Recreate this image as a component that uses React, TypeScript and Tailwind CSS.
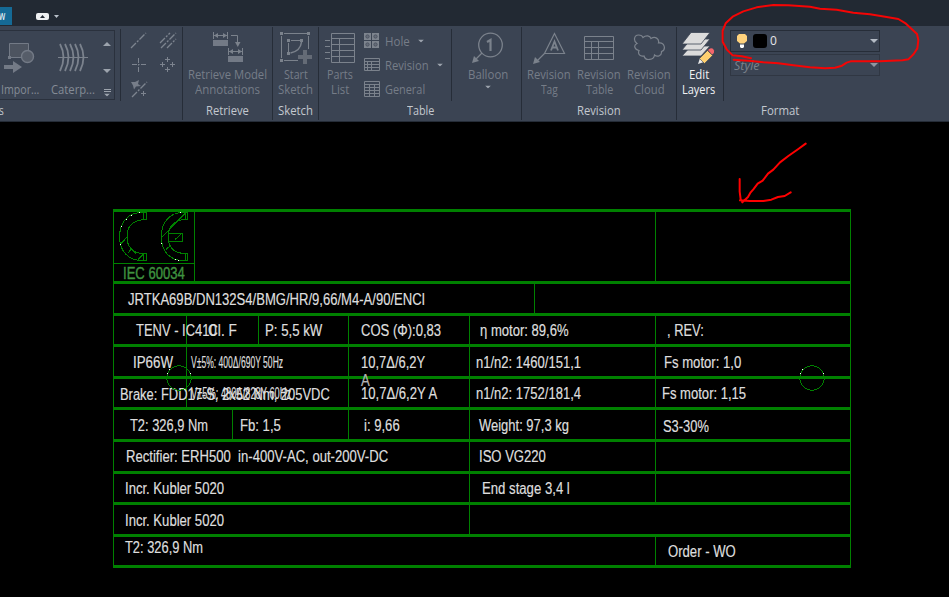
// src/App.tsx
import { useLayoutEffect, useRef, useState } from "react";
import type { ReactNode } from "react";

interface FitProps {
  w: number;
  className?: string;
  children: ReactNode;
}

// Condenses a single line of text to the given width
function Fit({ w, className = "", children }: FitProps) {
  const ref = useRef<HTMLSpanElement>(null);
  const [scale, setScale] = useState(1);

  useLayoutEffect(() => {
    if (ref.current) setScale(w / ref.current.offsetWidth);
  }, [w]);

  return (
    <span className={`block shrink-0 ${className}`} style={{ width: w }}>
      <span ref={ref} className="inline-block origin-left whitespace-pre align-top" style={{ transform: `scaleX(${scale})` }}>
        {children}
      </span>
    </span>
  );
}

function Caret({ className = "" }: { className?: string }) {
  return (
    <svg className={`shrink-0 ${className}`} width="8" height="4" viewBox="0 0 8 4">
      <path d="M0 0h8L4 4z" fill="currentColor" />
    </svg>
  );
}

const title = "mt-auto mb-[2px] flex h-[15px] justify-center text-[#c3c8cf]";
const bigButton = "flex flex-col items-center text-[#767d88]";

/* ---------- icons ---------- */

function ImportIcon() {
  return (
    <svg width="32" height="32" viewBox="0 0 32 32" fill="none" stroke="#737a86">
      <path d="M5.5 1.5h19v14h-19z" fill="#4d5460" />
      <circle cx="23.5" cy="14.5" r="6" fill="#565d69" strokeWidth="1.4" />
      <path d="M4 14h3v3H4z" fill="#737a86" stroke="none" />
      <path d="M0 23h9v-4l9 6-9 6v-4H0z" fill="#737a86" stroke="none" />
    </svg>
  );
}

function CaterpillarIcon() {
  return (
    <svg width="30" height="29" viewBox="0 0 30 29" fill="none" stroke="#7b828d" strokeWidth="1.8">
      {[2, 7, 12, 17, 22].map((x) => (
        <path key={x} d={`M${x} 1q7 13 0 27`} />
      ))}
      <path d="M0 14.5h30" strokeWidth="1" />
    </svg>
  );
}

function LineTools() {
  return (
    <svg width="56" height="72" viewBox="0 0 56 72" fill="none" stroke="#7d848f" strokeWidth="1.3">
      <path d="M8 19L23 4M37 14L47 4M38 19L53 4M44 19L53 10" strokeDasharray="7 1.5 2 1.5" />
      <path d="M15.5 29v5m0 1.5v1m0 1.500v5M9 35.500h5m1 0h1.500m1.500 0h5" strokeWidth="1" />
      <path d="M44.500 28v5m-2.500-2.500h5M44.500 38v5m-2.500-2.500h5M39.500 33v5m-2.500-2.500h5M49.500 33v5m-2.500-2.500h5" strokeWidth="1" />
      <path d="M9 68L24 53" strokeDasharray="7 1.500 2 1.500" />
      <path d="M20.500 62v5M18 64.500h5" strokeWidth="1" />
      <path d="M8 53h4l4-2-1 4 3 2-5 .5-2 3-1-4z" fill="#767d89" stroke="none" />
    </svg>
  );
}

function RetrieveIcon() {
  return (
    <svg width="31" height="31" viewBox="0 0 31 31" fill="none" stroke="#7b828c">
      <path d="M.5 0v7M14.500 0v7M1 3.500h14M15.500 16v7M29.500 16v7M16 19.500h14M18 3.500h6.500V12" />
      <path d="M1 3.500l4-2.500v5zM14 3.500L10 1v5zM16 19.500l4-2.500v5zM29 19.500L25 17v5zM22 10h5.500l-2.700 5z" fill="#7b828c" stroke="none" />
      <path d="M0 8h15v6H0zM15 24h15v6H15z" fill="#737a86" stroke="none" />
    </svg>
  );
}

function SketchIcon() {
  return (
    <svg width="33" height="33" viewBox="0 0 33 33" fill="none" stroke="#7b828c">
      <path d="M4 1.500h23M1.500 4v22M4 28.500h14M28.500 4v13M8.500 11v9M11 8.500h9" />
      <path d="M21.500 10q-1 9-11 11" strokeWidth="1.500" />
      <path d="M0 0h3v3H0zM27 0h3v3h-3zM0 27h3v3H0zM7 7h3v3H7zM20 7h3v3h-3zM7 20h3v3H7z" fill="#7b828c" stroke="none" />
      <path d="M23 18h4v5h5v4h-5v5h-4v-5h-5v-4h5z" fill="#646b76" stroke="none" />
    </svg>
  );
}

function PartsIcon() {
  return (
    <svg width="31" height="31" viewBox="0 0 31 31" fill="none" stroke="#7b828c">
      <path d="M6.500.5h23v29h-23zM7 5.500h23M7 11.500h23M7 17.500h23M7 23.500h23M14.500 5v25M0 7.500h5M0 13.500h5M0 19.500h5M0 25.500h5" />
    </svg>
  );
}

function HoleIcon() {
  return (
    <svg width="16" height="16" viewBox="0 0 16 16">
      <path d="M0 0h7v7H0zM8 0h7v7H8zM0 8h7v7H0zM8 8h7v7H8z" fill="#7d848e" />
      <g fill="#666d79" stroke="#434b59" strokeWidth=".7">
        <circle cx="3.500" cy="3.500" r="1.700" />
        <circle cx="11.500" cy="3.500" r="1.700" />
        <circle cx="3.500" cy="11.500" r="1.700" />
        <circle cx="11.500" cy="11.500" r="1.700" />
      </g>
    </svg>
  );
}

function SmallRevisionIcon() {
  return (
    <svg width="16" height="16" viewBox="0 0 16 16" fill="none" stroke="#7b828c">
      <path d="M.5 1.500h15v12H.5zM1 4.500h14M1 7.500h14M1 10.500h14M3.500 5v8M7.500 5v8" />
    </svg>
  );
}

function GeneralIcon() {
  return (
    <svg width="16" height="16" viewBox="0 0 16 16" fill="none" stroke="#7b828c">
      <path d="M.5.5h15v15H.5zM1 3.500h14M1 6.500h14M1 9.500h14M1 12.500h14M5.500 4v11M10.500 4v11" />
    </svg>
  );
}

function BalloonIcon() {
  return (
    <svg width="32" height="32" viewBox="0 0 32 32" fill="none" stroke="#7b828c" strokeWidth="1.3">
      <circle cx="18.500" cy="13" r="11.800" />
      <path d="M10 21l-7 7" />
      <path d="M0 31l2-7 5 5z" fill="#7b828c" stroke="none" />
      <path d="M15 10l3.500-2v11" strokeWidth="2.200" />
    </svg>
  );
}

function TagIcon() {
  return (
    <svg width="33" height="33" viewBox="0 0 33 33" fill="none" stroke="#7b828c" strokeWidth="1.200">
      <path d="M21.500 1.500L11.500 21.500h20zM11.500 21.500l-7 7" />
      <path d="M0 32l2-7 5 5z" fill="#7b828c" stroke="none" />
      <path d="M18 18.500l3.500-9 3.500 9M19 15.500h5" strokeWidth="1.800" />
    </svg>
  );
}

function TableIcon() {
  return (
    <svg width="31" height="25" viewBox="0 0 31 25" fill="none" stroke="#7b828c">
      <path d="M.5.5h29v23H.5zM0 5.500h30M0 11.500h30M0 17.500h30M7.500 6v18M14.500 6v18" />
    </svg>
  );
}

function CloudIcon() {
  return (
    <svg width="33" height="28" viewBox="0 0 33 28" fill="none" stroke="#7b828c" strokeWidth="1.200">
      <path d="M4 9.500C0 7 1 1 5.500 1c2 0 4 1 4.500 2.500C13 1 17 1.500 18 4.500c4-2.500 8.500 0 7.500 4.500 6-1 8 6.500 3 8.500.5 4-4 6-7 3.500-.5 5-9 6.500-10.500 1-4 1-6.500-2-5-5.500C1 15.500.5 11 4 9.500z" />
    </svg>
  );
}

function LayersIcon() {
  return (
    <svg width="33" height="33" viewBox="0 0 33 33">
      <g fill="#dcdcdc" stroke="#3b4453" strokeWidth=".8">
        <path d="M0 24l9-10h19l-9 10z" />
        <path d="M0 18L9 7h19l-9 11z" />
        <path d="M0 12L9 .5h19L19 12z" />
      </g>
      <path d="M16 32l2-6 4 4z" fill="#e8e8e8" />
      <path d="M17.500 26.500l8-8 5 5-8 8z" fill="#ffd070" stroke="#3b4453" strokeWidth=".6" />
      <path d="M26 18l2-1.500q3-1 4 2 .5 2-1 3.500l-1 .5z" fill="#f4656b" />
    </svg>
  );
}

/* ---------- ribbon ---------- */

function Ribbon() {
  return (
    <div className="font-['Open_Sans',sans-serif] text-[12px] leading-[15px]">
      <div className="flex h-[26px] bg-[#222933] pt-[7px]">
        <div className="h-[18px] w-3 bg-[#156a96] text-white">
          <Fit w={6} className="-ml-px mt-px">w</Fit>
        </div>
        <div className="ml-6 mt-[6px] flex h-[7px] w-[13px] items-center justify-center rounded-[2px] bg-[#eef0f2]">
          <svg width="5" height="3" viewBox="0 0 5 3"><path d="M0 3L2.500 0 5 3z" fill="#222933" /></svg>
        </div>
        <svg className="ml-[5px] mt-[8px]" width="5" height="3" viewBox="0 0 5 3"><path d="M0 0h5L2.500 3z" fill="#b9c0c9" /></svg>
      </div>

      <div className="flex h-[96px] border-b border-[#252c37] bg-[#3b4453] py-px text-[#c3c8cf]">
        {/* Symbols */}
        <div className="flex w-[183px] flex-col border-r border-[#262d38]">
          <div className="flex h-[73px] pt-[2px]">
            <div className="mt-px flex h-[70px] w-[115px] shrink-0 border border-l-0 border-[#2a313d] text-[#858c96]">
              <div className="flex w-[45px] flex-col pl-[4px] pt-[11px]">
                <ImportIcon />
                <Fit w={38} className="-ml-[3px] mt-[8px]">Impor...</Fit>
              </div>
              <div className="ml-[6px] flex w-[46px] flex-col pt-[12px]">
                <div className="pl-[7px]"><CaterpillarIcon /></div>
                <Fit w={44} className="mt-[10px]">Caterp...</Fit>
              </div>
              <div className="ml-[6px] flex flex-col items-center pt-[11px] text-[#9ca3ad]">
                <Caret className="rotate-180" />
                <Caret className="mt-[23px]" />
                <div className="mt-[16px] h-[3px] w-[7px] border-y border-current" />
                <Caret className="mt-px scale-75" />
              </div>
            </div>
            <div className="ml-[5px] h-[72px] w-px shrink-0 bg-[#262d38]" />
            <div className="ml-[2px] shrink-0"><LineTools /></div>
          </div>
          <div className="mt-auto mb-[2px] h-[15px]"><Fit w={5} className="-ml-px">s</Fit></div>
        </div>

        {/* Retrieve */}
        <div className="flex w-[90px] flex-col border-r border-[#262d38]">
          <div className={`${bigButton} pt-[5px]`}>
            <div className="flex h-[35px] pl-[2px]"><RetrieveIcon /></div>
            <Fit w={79}>Retrieve Model</Fit>
            <Fit w={65}>Annotations</Fit>
          </div>
          <div className={title}><Fit w={43}>Retrieve</Fit></div>
        </div>

        {/* Sketch */}
        <div className="flex w-[46px] flex-col border-r border-[#262d38]">
          <div className={`${bigButton} pt-[5px]`}>
            <div className="flex h-[35px] pl-[2px]"><SketchIcon /></div>
            <Fit w={24}>Start</Fit>
            <Fit w={35}>Sketch</Fit>
          </div>
          <div className={title}><Fit w={35}>Sketch</Fit></div>
        </div>

        {/* Table */}
        <div className="flex w-[203px] flex-col border-r border-[#262d38]">
          <div className="flex h-[75px] text-[#767d88]">
            <div className={`${bigButton} w-[43px] shrink-0 pr-px pt-[6px]`}>
              <div className="flex h-[34px]"><PartsIcon /></div>
              <Fit w={26}>Parts</Fit>
              <Fit w={18}>List</Fit>
            </div>
            <div className="flex w-[89px] shrink-0 flex-col gap-[8px] pl-[2px] pt-[6px]">
              <div className="flex h-4 items-center">
                <HoleIcon />
                <Fit w={25} className="ml-[5px]">Hole</Fit>
                <Caret className="ml-[7px] scale-x-75 scale-y-75 text-[#9ca3ad]" />
              </div>
              <div className="flex h-4 items-center">
                <SmallRevisionIcon />
                <Fit w={44} className="ml-[5px]">Revision</Fit>
                <Caret className="ml-[7px] scale-x-75 scale-y-75 text-[#9ca3ad]" />
              </div>
              <div className="flex h-4 items-center">
                <GeneralIcon />
                <Fit w={40} className="ml-[5px]">General</Fit>
              </div>
            </div>
            <div className="mt-[2px] h-[72px] w-px shrink-0 bg-[#262d38]" />
            <div className={`${bigButton} w-[69px] pl-[3px] pt-[5px]`}>
              <div className="flex h-[35px] pr-px"><BalloonIcon /></div>
              <Fit w={40}>Balloon</Fit>
              <Caret className="mt-[3px] scale-75 text-[#9ca3ad]" />
            </div>
          </div>
          <div className={title}><Fit w={27}>Table</Fit></div>
        </div>

        {/* Revision */}
        <div className="flex w-[155px] flex-col border-r border-[#262d38]">
          <div className="flex pl-[2px] pt-[5px]">
            <div className={`${bigButton} w-[50px]`}>
              <div className="flex h-[35px] pl-px"><TagIcon /></div>
              <Fit w={44}>Revision</Fit>
              <Fit w={17}>Tag</Fit>
            </div>
            <div className={`${bigButton} w-[50px]`}>
              <div className="flex h-[35px] pt-[4px]"><TableIcon /></div>
              <Fit w={44}>Revision</Fit>
              <Fit w={27}>Table</Fit>
            </div>
            <div className={`${bigButton} w-[50px]`}>
              <div className="flex h-[35px] pt-[2px]"><CloudIcon /></div>
              <Fit w={44}>Revision</Fit>
              <Fit w={31}>Cloud</Fit>
            </div>
          </div>
          <div className={title}><Fit w={44}>Revision</Fit></div>
        </div>

        {/* Format */}
        <div className="flex w-[272px] flex-col">
          <div className="flex h-[75px]">
            <div className="flex w-[46px] flex-col items-center pr-[3px] pt-[5px] text-[#f1f2f4]">
              <div className="flex h-[35px] pr-px"><LayersIcon /></div>
              <Fit w={20}>Edit</Fit>
              <Fit w={33}>Layers</Fit>
            </div>
            <div className="mt-[2px] h-[72px] w-px bg-[#262d38]" />
            <div className="flex flex-col gap-[2px] pl-[6px] pt-[3px]">
              <div className="flex h-[22px] w-[150px] items-center border border-[#262d38] pl-[5px] text-[#e4e6e9]">
                <svg width="12" height="15" viewBox="0 0 12 15">
                  <path d="M3 0h6l2 2v5L8 9.500H4L1 7V2z" fill="#ffd27c" />
                  <path d="M4 10.500h4V13l-1 1H5l-1-1z" fill="#fff" />
                </svg>
                <div className="ml-[5px] size-[14px] rounded-[3px] bg-black" />
                <Fit w={7} className="-mt-px ml-[3px]">0</Fit>
                <Caret className="ml-auto mr-px text-[#b4bbc5]" />
              </div>
              <div className="flex h-[22px] w-[150px] items-center border border-[#303743] pl-[3px] italic text-[#7b828c]">
                <Fit w={26}>Style</Fit>
                <Caret className="ml-auto mr-px text-[#8e96a1]" />
              </div>
            </div>
          </div>
          <div className="mt-auto mb-[2px] flex h-[15px] pl-[84px]"><Fit w={38}>Format</Fit></div>
        </div>
      </div>
    </div>
  );
}

/* ---------- nameplate drawing ---------- */

const cell = "relative flex shrink-0 items-start border-r border-[#008000]";
const row = "flex border-b-[3px] border-[#008000]";

function CEMark() {
  return (
    <svg width="80" height="51" viewBox="27 36 240 153" fill="none" stroke="#008000" strokeWidth="3" shapeRendering="crispEdges">
      <path d="M125 37h-10C65 37 44 70 44 110s21 72 71 72h10v-21h-10c-33-3-49-22-49-51s16-48 49-51h10zM116 37v22M116 160v22M48 131l18-20M68 160l13-15M99 178l18-18M76 145l18 16" />
      <path d="M248 37h-12c-44 0-67 32-67 73s23 72 67 72h12v-21h-12c-24-2-41-15-46-38v-23c5-24 22-39 46-41h12zM240 37v22M240 160v22M190 100h43v23h-43zM172 110l68-70M182 149l17-14M210 119l18-17" />
      <path d="M102 37h3M79 46h3M63 59h3M48 79h3M45 132h3M225 37h3M168 130h3M210 178h3M220 181h3" stroke="#fff" />
    </svg>
  );
}

function Nameplate() {
  return (
    <div className="ml-[113px] mt-[87px] w-[738px] border-l border-t-[3px] border-[#008000] font-['Liberation_Sans',Arial,sans-serif] text-[16px] leading-[19px] text-[#dedede] [-webkit-text-stroke:0.2px_currentColor]">
      <div className={`${row} h-[72px]`}>
        <div className={`${cell} w-[81px] flex-col`}>
          <CEMark />
          <div className="h-[18px] w-full border-t border-[#008000] pl-[9px] text-[#3f923f] [-webkit-text-stroke:0.4px_currentColor]">
            <Fit w={62}>IEC 60034</Fit>
          </div>
        </div>
        <div className={`${cell} w-[461px]`} />
        <div className={`${cell} w-[195px]`} />
      </div>

      <div className={`${row} h-[32px]`}>
        <div className={`${cell} w-[421px] pl-[14px] pt-[6px]`}>
          <Fit w={297}>JRTKA69B/DN132S4/BMG/HR/9,66/M4-A/90/ENCI</Fit>
        </div>
        <div className={`${cell} w-[316px]`} />
      </div>

      <div className={`${row} h-[31px]`}>
        <div className={`${cell} w-[73px] pl-[22px] pt-[5px]`}><Fit w={81}>TENV - IC410</Fit></div>
        <div className={`${cell} w-[72px] pl-[21px] pt-[5px]`}><Fit w={29}>Cl. F</Fit></div>
        <div className={`${cell} w-[90px] pl-[6px] pt-[5px]`}><Fit w={57}>P: 5,5 kW</Fit></div>
        <div className={`${cell} w-[121px] pl-[12px] pt-[5px]`}><Fit w={80}>COS (Φ):0,83</Fit></div>
        <div className={`${cell} w-[186px] pl-[10px] pt-[5px]`}><Fit w={89}>η motor: 89,6%</Fit></div>
        <div className={`${cell} w-[195px] pl-[11px] pt-[5px]`}><Fit w={37}>, REV:</Fit></div>
      </div>

      <div className={`${row} h-[32px]`}>
        <div className={`${cell} w-[73px] pl-[19px] pt-[6px]`}><Fit w={40}>IP66W</Fit></div>
        <div className={`${cell} w-[162px] pl-[4px] pt-[6px]`}><Fit w={92}>V±5%: 400Δ/690Y 50Hz</Fit></div>
        <div className={`${cell} w-[121px] pl-[12px] pt-[6px]`}>
          <Fit w={64}>10,7Δ/6,2Y</Fit>
          <Fit w={9} className="absolute left-[12px] top-[24px] text-[#b5b5b5]">A</Fit>
        </div>
        <div className={`${cell} w-[186px] pl-[6px] pt-[6px]`}><Fit w={105}>n1/n2: 1460/151,1</Fit></div>
        <div className={`${cell} w-[195px] pl-[8px] pt-[6px]`}><Fit w={77}>Fs motor: 1,0</Fit></div>
      </div>

      <div className={`${row} h-[31px]`}>
        <div className={`${cell} w-[73px] pl-[6px] pt-[6px]`}><Fit w={210}>Brake: FDD17-S, 2x52 Nm, 205VDC</Fit></div>
        <div className={`${cell} w-[162px] pl-[4px] pt-[5px]`}><Fit w={100}>V±5%: 480Δ/828Y 60Hz</Fit></div>
        <div className={`${cell} w-[121px] pl-[12px] pt-[5px]`}><Fit w={76}>10,7Δ/6,2Y A</Fit></div>
        <div className={`${cell} w-[186px] pl-[6px] pt-[5px]`}><Fit w={105}>n1/n2: 1752/181,4</Fit></div>
        <div className={`${cell} w-[195px] pl-[6px] pt-[5px]`}><Fit w={84}>Fs motor: 1,15</Fit></div>
      </div>

      <div className={`${row} h-[32px]`}>
        <div className={`${cell} w-[119px] pl-[16px] pt-[6px]`}><Fit w={78}>T2: 326,9 Nm</Fit></div>
        <div className={`${cell} w-[116px] pl-[7px] pt-[6px]`}><Fit w={41}>Fb: 1,5</Fit></div>
        <div className={`${cell} w-[121px] pl-[15px] pt-[6px]`}><Fit w={36}>i: 9,66</Fit></div>
        <div className={`${cell} w-[186px] pl-[9px] pt-[6px]`}><Fit w={90}>Weight: 97,3 kg</Fit></div>
        <div className={`${cell} w-[195px] pl-[7px] pt-[7px]`}><Fit w={46}>S3-30%</Fit></div>
      </div>

      <div className={`${row} h-[32px]`}>
        <div className={`${cell} w-[356px] pl-[12px] pt-[5px]`}><Fit w={262}>Rectifier: ERH500  in-400V-AC, out-200V-DC</Fit></div>
        <div className={`${cell} w-[186px] pl-[9px] pt-[5px]`}><Fit w={67}>ISO VG220</Fit></div>
        <div className={`${cell} w-[195px]`} />
      </div>

      <div className={`${row} h-[31px]`}>
        <div className={`${cell} w-[356px] pl-[11px] pt-[5px]`}><Fit w={99}>Incr. Kubler 5020</Fit></div>
        <div className={`${cell} w-[186px] pl-[12px] pt-[5px]`}><Fit w={88}>End stage 3,4 l</Fit></div>
        <div className={`${cell} w-[195px]`} />
      </div>

      <div className={`${row} h-[32px]`}>
        <div className={`${cell} w-[356px] pl-[11px] pt-[6px]`}><Fit w={99}>Incr. Kubler 5020</Fit></div>
        <div className={`${cell} w-[381px]`} />
      </div>

      <div className={`${row} h-[31px]`}>
        <div className={`${cell} w-[542px] pl-[11px] pt-px`}><Fit w={78}>T2: 326,9 Nm</Fit></div>
        <div className={`${cell} w-[195px] pl-[12px] pt-[5px]`}><Fit w={68}>Order - WO</Fit></div>
      </div>
    </div>
  );
}

function MountingHole({ className }: { className: string }) {
  return (
    <svg className={`absolute ${className}`} width="26" height="26" viewBox="0 0 26 26" fill="none" stroke="#008000" shapeRendering="crispEdges">
      <circle cx="13" cy="13" r="12.200" />
      <path d="M1 8h1M24 8h1M3 4h1" stroke="#fff" />
    </svg>
  );
}

export default function App() {
  return (
    <div className="relative h-[597px] w-[949px] overflow-hidden bg-black">
      <Ribbon />
      <Nameplate />

      <MountingHole className="left-[166px] top-[365px]" />
      <MountingHole className="left-[799px] top-[365px]" />

      {/* Red pen markup */}
      <svg className="absolute left-[720px] top-0" width="229" height="125" viewBox="0 0 687 375" fill="none" stroke="#f50505" strokeWidth="6" strokeLinecap="round" strokeLinejoin="round">
        <path d="M93 175L65 169 38 166 20 148 8 125V92L17 70 38 50 70 34 110 22 160 15 205 16 270 20 300 26 350 29 400 38 450 43 500 51 535 57 558 71 575 87 591 102 595 120 592 145 581 162 565 178 548 181 480 184H392L380 188 366 197 345 203 315 205 270 202 220 196 175 190 130 187 85 182 41 179" />
      </svg>
      <svg className="absolute left-[720px] top-[130px]" width="140" height="90" viewBox="0 0 420 270" fill="none" stroke="#f00" strokeWidth="6" strokeLinecap="round" strokeLinejoin="round">
        <path d="M257 41L235 57 205 78 180 97 160 119 144 131 128 152 113 161 100 178 92 187 84 201 67 217 62 208 59 185V147M60 211l30 2h40l24-4 20-8 20-3 18-11" />
      </svg>
    </div>
  );
}
